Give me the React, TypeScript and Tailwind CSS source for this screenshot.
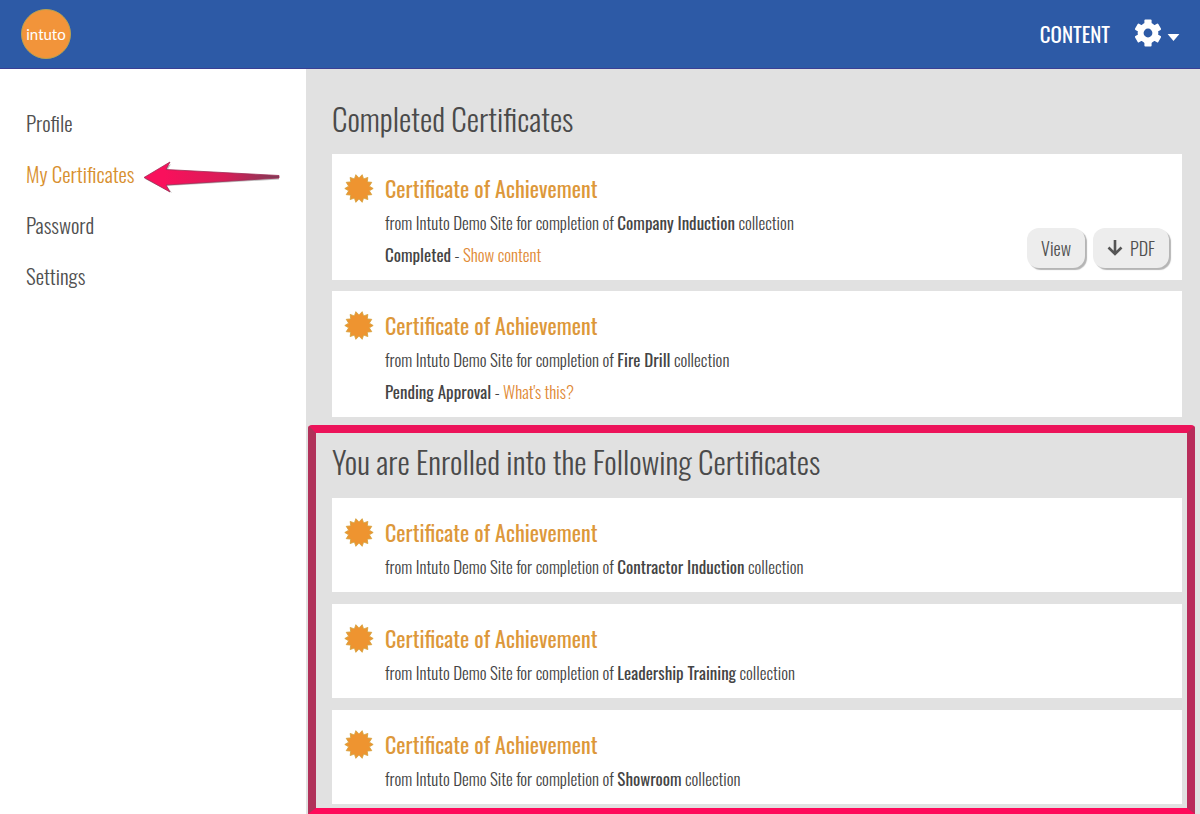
import { ReactNode } from 'react';

const menu = ['Profile', 'My Certificates', 'Password', 'Settings'];

const enrolled = ['Contractor Induction', 'Leadership Training', 'Showroom'];

// Zig-zag seal outline, 14 teeth
const sealPoints = Array.from({ length: 28 }, (_, i) => {
  const r = i % 2 === 0 ? 14.2 : 10.6;
  const a = ((i + 1) * Math.PI) / 14;
  return `${(15 + r * Math.sin(a)).toFixed(2)},${(15.5 - r * Math.cos(a)).toFixed(2)}`;
}).join(' ');

function Seal() {
  return (
    <svg viewBox="0 0 30 30" className="h-[30px] w-[30px] shrink-0" aria-hidden="true">
      <polygon points={sealPoints} fill="#ee9430" stroke="#d3a038" strokeWidth="0.8" strokeLinejoin="round" />
    </svg>
  );
}

function Gear() {
  return (
    <svg viewBox="0 0 28 28" className="h-7 w-7" aria-hidden="true">
      <g fill="#fff">
        <circle cx="14" cy="14" r="10.4" />
        {[0, 60, 120].map((deg) => (
          <rect key={deg} x="10.4" y="0.6" width="7.2" height="26.8" rx="1" transform={`rotate(${deg} 14 14)`} />
        ))}
      </g>
      <circle cx="14" cy="14" r="4.4" fill="#2d5aa6" />
    </svg>
  );
}

function Certificate({ collection, status, actions }: { collection: string; status?: ReactNode; actions?: ReactNode }) {
  return (
    <article className="flex bg-white pt-[19px] pr-[13px] pb-[9px] pl-3">
      <Seal />
      <div className="ml-[11px] flex-1">
        <h3 className="text-[22px] leading-[30px] text-[#dd983a]">Certificate of Achievement</h3>
        <p className="pt-1 text-[17px] leading-8 font-light text-[#444]">
          from Intuto Demo Site for completion of <strong className="font-normal">{collection}</strong> collection
        </p>
        {status && <p className="text-[17px] leading-8 font-light text-[#444]">{status}</p>}
      </div>
      {actions && <div className="flex items-end gap-2 pb-[3px]">{actions}</div>}
    </article>
  );
}

export default function App() {
  return (
    <div className="flex min-h-screen flex-col bg-white font-['Oswald','Roboto_Condensed','Liberation_Sans_Narrow','Liberation_Sans',sans-serif]">
      <header className="flex h-[69px] items-center justify-between border-b border-[#3a3f94] bg-[#2d5aa6] pr-5 pl-[21px]">
        <a
          href="#"
          className="flex h-[50px] w-[50px] items-center justify-center rounded-full border border-[#b6a252] bg-[#f2943a] font-['Lato',sans-serif] text-[15px] text-white"
        >
          intuto
        </a>
        <div className="flex items-center">
          <a href="#" className="text-[21px] text-white">CONTENT</a>
          <button type="button" aria-label="Settings menu" className="ml-6 flex items-center gap-[5px] pb-0.5">
            <Gear />
            <svg viewBox="0 0 13 7" className="mt-2 h-[7px] w-[13px]" aria-hidden="true">
              <path d="M0.6 0h11.8L6.5 7z" fill="#fff" />
            </svg>
          </button>
        </div>
      </header>

      <div className="flex flex-1">
        <nav className="w-[306px] shrink-0 pt-7 pl-[26px]">
          <ul>
            {menu.map((item) => (
              <li key={item} className="relative flex h-[51px] items-center">
                <a
                  href="#"
                  className={item === 'My Certificates' ? 'text-[21px] font-light text-[#d8902f]' : 'text-[21px] font-light text-[#505050]'}
                >
                  {item}
                </a>
                {item === 'My Certificates' && (
                  <svg viewBox="0 0 138 38" className="absolute top-2.5 left-[117px] h-[38px] w-[138px]" aria-hidden="true">
                    <defs>
                      <linearGradient id="arrow" x1="0" x2="1">
                        <stop offset="0.15" stopColor="#f9105c" />
                        <stop offset="0.6" stopColor="#d81c57" />
                        <stop offset="1" stopColor="#7d3c55" />
                      </linearGradient>
                    </defs>
                    <path d="M2 21L28 6L24 13L136 19.500V21.500L24 28L29 35Z" fill="#999" opacity="0.6" />
                    <path d="M1 19.500L27 4L23 11.500L136 17.500V20L23 27L27 34Z" fill="url(#arrow)" stroke="#a02c55" strokeWidth="0.8" />
                  </svg>
                )}
              </li>
            ))}
          </ul>
        </nav>

        <main className="min-w-0 flex-1 bg-[#e1e1e1] pr-[5px] pl-[2px]">
          <section className="pr-[13px] pb-2 pl-6">
            <h2 className="flex h-[85px] items-center pt-3.5 text-[31px] font-light text-[#4a4a4a]">Completed Certificates</h2>
            <div className="flex flex-col gap-[11px]">
              <Certificate
                collection="Company Induction"
                status={
                  <>
                    <strong className="font-normal">Completed</strong> - <a href="#" className="text-[#df8a35]">Show content</a>
                  </>
                }
                actions={
                  <>
                    <button type="button" className="h-10 rounded-xl bg-[#ededed] px-[14px] text-lg font-light text-[#505050] shadow-[2px_2px_1px_#b5b5b5]">
                      View
                    </button>
                    <button type="button" className="flex h-10 items-center gap-[7px] rounded-xl bg-[#ededed] px-[14px] text-lg font-light text-[#505050] shadow-[2px_2px_1px_#b5b5b5]">
                      <svg viewBox="0 0 16 18" className="h-[18px] w-4" fill="none" stroke="#555" strokeWidth="2.6" aria-hidden="true">
                        <path d="M8 1v14M1.500 8.500L8 15l6.500-6.500" />
                      </svg>
                      PDF
                    </button>
                  </>
                }
              />
              <Certificate
                collection="Fire Drill"
                status={
                  <>
                    <strong className="font-normal">Pending Approval</strong> - <a href="#" className="text-[#df8a35]">What's this?</a>
                  </>
                }
              />
            </div>
          </section>

          {/* Highlighted block */}
          <section className="rounded-t-sm border-8 border-b-[6px] border-t-[#ec135a] border-r-[#b82c5a] border-b-[#ff0a5a] border-l-[#b0325a] pr-[5px] pb-1 pl-4">
            <h2 className="flex h-[65px] items-center pb-2 text-[31px] font-light text-[#4a4a4a]">You are Enrolled into the Following Certificates</h2>
            <div className="flex flex-col gap-3">
              {enrolled.map((name) => (
                <Certificate key={name} collection={name} />
              ))}
            </div>
          </section>
        </main>
      </div>
    </div>
  );
}
